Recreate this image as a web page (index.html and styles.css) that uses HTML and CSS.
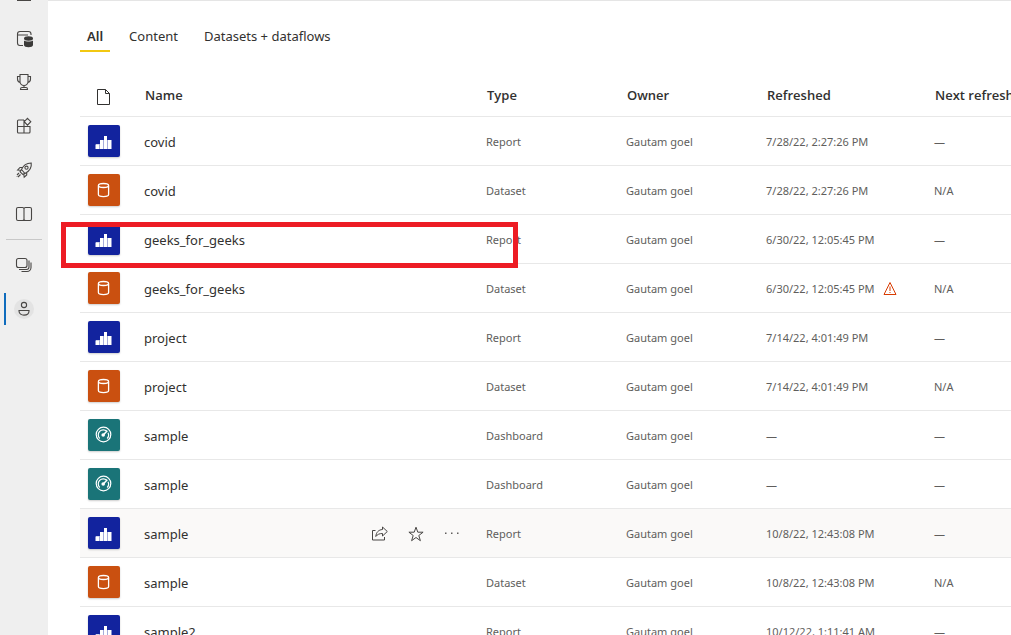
FILE: index.html
```html
<!DOCTYPE html>
<html lang="en">
<head>
    <meta charset="UTF-8">
    <meta name="viewport" content="width=device-width, initial-scale=1.0">
    <title>My workspace</title>
    <link rel="stylesheet" href="styles.css">
</head>
<body>
    <!-- shared icons -->
    <svg class="sprite" aria-hidden="true">
        <symbol id="report" viewBox="0 0 32 32">
            <path fill="#a6acdb" d="M8 19h4v5H8zM12 15h4v9h-4zM16 15h4v9h-4z"/>
            <path fill="#fff" d="M7.500 19.500H11V24H7.500zM12 15h3v9h-3zM16 11h3v13h-3zM20 15h3.500v9H20z"/>
        </symbol>
        <symbol id="dataset" viewBox="0 0 32 32">
            <path fill="none" stroke="#fff" stroke-width="1.3" d="M10.400 11.500v9c0 1.300 2.300 2.100 5.100 2.100s5.100-.8 5.100-2.100v-9M10.400 11.500c0-1.200 2.300-2 5.100-2s5.100.8 5.100 2-2.300 2-5.100 2-5.100-.8-5.100-2z"/>
        </symbol>
        <symbol id="dashboard" viewBox="0 0 32 32">
            <g fill="none" stroke="#fff" stroke-width="1.2">
                <circle cx="15.500" cy="15.500" r="7.300"/>
                <path d="M11.800 19.500a5 5 0 1 1 7-7.300M20 13.800a5 5 0 0 1-.8 5.700"/>
                <path stroke-width="1.5" d="M15.500 15.700l3.800-4"/>
            </g>
            <circle cx="15.200" cy="16" r="1.800" fill="#fff"/>
        </symbol>
    </svg>

    <div class="app">
        <nav class="sidebar" aria-label="Main">
            <a href="#" aria-label="Create"><svg viewBox="0 0 20 20"><path d="M3 5.500h14M3 16.500h14"/></svg></a>
            <a href="#" aria-label="Data hub"><svg viewBox="0 0 20 20">
                <path d="M9 17.500H6A2.500 2.500 0 0 1 3.500 15V6A2.500 2.500 0 0 1 6 3.500h8.500A2.500 2.500 0 0 1 17 6v1M3.500 7H14"/>
                <ellipse class="solid" cx="14.500" cy="10.500" rx="4.500" ry="2.200"/>
                <path class="solid" d="M10 12.500c1.500 1.400 7.500 1.400 9 0V17c0 3-9 3-9 0z"/>
            </svg></a>
            <a href="#" aria-label="Goals"><svg viewBox="0 0 20 20">
                <path d="M6 2.500h8v7a4 4 0 0 1-8 0zM6 4.500H3.500v2.500c0 2 1 3.300 3 3.500M14 4.500h2.500v2.500c0 2-1 3.300-3 3.500M10 13.500v2M6.500 17.500v-.5q0-1.500 1.500-1.500h4q1.500 0 1.500 1.500v.5z"/>
            </svg></a>
            <a href="#" aria-label="Apps"><svg viewBox="0 0 20 20">
                <path d="M10 4H4.500Q3.500 4 3.500 5v11q0 1 1 1H15q1 0 1-1v-5.500H3.500M10 4v13M13.500 2.300l3.300 3.400-3.300 3.400-3.300-3.400z"/>
            </svg></a>
            <a href="#" aria-label="Deployment pipelines"><svg viewBox="0 0 20 20">
                <path d="M7.500 9.500c1.800-4.300 5.300-6.500 9.700-6.500.7 4.600-1.700 8.100-6.200 10.500zM8.500 7.500H6L3.700 10l3.800.2M12.700 12v3l-2.500 2.200-.5-3.500M7.300 10l-1.300 1.700 2.700 2.700 1.800-1M5 13l-2 2M6.500 14.500l-2.500 2.500M3 16.500v.5"/>
                <circle cx="12.500" cy="7.700" r="1.600"/>
            </svg></a>
            <a href="#" aria-label="Learn"><svg viewBox="0 0 20 20">
                <path d="M10 5v10.500M10 5Q10 3.500 8.500 3.500H4Q2.500 3.500 2.500 5v10q0 1.500 1.500 1.500h4.500q1.500 0 1.500-1.500M10 5q0-1.500 1.500-1.500H16q1.500 0 1.500 1.500v10q0 1.500-1.500 1.500h-4.500Q10 16.500 10 15"/>
            </svg></a>
            <hr>
            <a href="#" aria-label="Workspaces"><svg viewBox="0 0 20 20">
                <rect x="2.500" y="3.500" width="10.500" height="9" rx="2"/>
                <path d="M5 14.500h7.500a2.500 2.500 0 0 0 2.500-2.500V5.500M7.500 16.500h5.500a4 4 0 0 0 4-4v-5"/>
            </svg></a>
            <a href="#" class="current" aria-label="My workspace" aria-current="page"><span><svg viewBox="0 0 20 20">
                <circle cx="10" cy="6" r="2.600"/>
                <path d="M5 11.500h10v.5c0 5.500-10 5.500-10 0z"/>
            </svg></span></a>
        </nav>

        <main>
            <div class="tabs">
                <a href="#" class="active">All</a>
                <a href="#">Content</a>
                <a href="#">Datasets + dataflows</a>
            </div>

            <table>
                <colgroup>
                    <col class="col-icon">
                    <col class="col-name">
                    <col class="col-type">
                    <col class="col-owner">
                    <col class="col-refreshed">
                    <col>
                </colgroup>
                <thead>
                    <tr>
                        <th class="icon" aria-label="Kind"><svg class="file" viewBox="0 0 13 16"><path d="M.5.5h8l4 4v11H.500zM8.500.5v4h4"/></svg></th>
                        <th>Name</th>
                        <th>Type</th>
                        <th>Owner</th>
                        <th>Refreshed</th>
                        <th>Next refresh</th>
                    </tr>
                </thead>
                <tbody>
                    <tr>
                        <td class="icon"><svg class="tile report"><use href="#report"/></svg></td>
                        <td class="name"><a href="#">covid</a></td>
                        <td>Report</td><td>Gautam goel</td><td>7/28/22, 2:27:26 PM</td><td>—</td>
                    </tr>
                    <tr>
                        <td class="icon"><svg class="tile dataset"><use href="#dataset"/></svg></td>
                        <td class="name"><a href="#">covid</a></td>
                        <td>Dataset</td><td>Gautam goel</td><td>7/28/22, 2:27:26 PM</td><td>N/A</td>
                    </tr>
                    <tr>
                        <td class="icon"><svg class="tile report"><use href="#report"/></svg><span class="highlight"></span></td>
                        <td class="name"><a href="#">geeks_for_geeks</a></td>
                        <td>Report</td><td>Gautam goel</td><td>6/30/22, 12:05:45 PM</td><td>—</td>
                    </tr>
                    <tr>
                        <td class="icon"><svg class="tile dataset"><use href="#dataset"/></svg></td>
                        <td class="name"><a href="#">geeks_for_geeks</a></td>
                        <td>Dataset</td><td>Gautam goel</td>
                        <td><span class="failed">6/30/22, 12:05:45 PM
                            <svg viewBox="0 0 14 14" role="img" aria-label="Refresh failed"><path d="M7 1.500L13 13.500H1zM7 5.500v4.500M7 11v1"/></svg></span></td>
                        <td>N/A</td>
                    </tr>
                    <tr>
                        <td class="icon"><svg class="tile report"><use href="#report"/></svg></td>
                        <td class="name"><a href="#">project</a></td>
                        <td>Report</td><td>Gautam goel</td><td>7/14/22, 4:01:49 PM</td><td>—</td>
                    </tr>
                    <tr>
                        <td class="icon"><svg class="tile dataset"><use href="#dataset"/></svg></td>
                        <td class="name"><a href="#">project</a></td>
                        <td>Dataset</td><td>Gautam goel</td><td>7/14/22, 4:01:49 PM</td><td>N/A</td>
                    </tr>
                    <tr>
                        <td class="icon"><svg class="tile dashboard"><use href="#dashboard"/></svg></td>
                        <td class="name"><a href="#">sample</a></td>
                        <td>Dashboard</td><td>Gautam goel</td><td>—</td><td>—</td>
                    </tr>
                    <tr>
                        <td class="icon"><svg class="tile dashboard"><use href="#dashboard"/></svg></td>
                        <td class="name"><a href="#">sample</a></td>
                        <td>Dashboard</td><td>Gautam goel</td><td>—</td><td>—</td>
                    </tr>
                    <tr class="hovered">
                        <td class="icon"><svg class="tile report"><use href="#report"/></svg></td>
                        <td class="name">
                            <div class="name-row">
                                <a href="#">sample</a>
                                <div class="actions">
                                    <button type="button" aria-label="Share"><svg viewBox="0 0 16 16"><path d="M3.500 4.500H.5v9.500h12V11M10.500 1L15.300 5.500l-4.800 4.500V7.500C7.500 7.500 5.500 8.300 3.800 10.500 4.200 6.300 6.500 3.800 10.500 3.500z"/></svg></button>
                                    <button type="button" aria-label="Favorite"><svg viewBox="0 0 16 16"><path d="M8 1.200l1.800 5h5.300l-4.300 3.300 1.600 5.200L8 11.500l-4.400 3.200 1.600-5.200L.9 6.200h5.300z"/></svg></button>
                                    <button type="button" aria-label="More options"><svg viewBox="0 0 16 16"><path class="solid" d="M1 6.500h1.500V8H1zM7 6.500h1.500V8H7zM13 6.500h1.500V8H13z"/></svg></button>
                                </div>
                            </div>
                        </td>
                        <td>Report</td><td>Gautam goel</td><td>10/8/22, 12:43:08 PM</td><td>—</td>
                    </tr>
                    <tr>
                        <td class="icon"><svg class="tile dataset"><use href="#dataset"/></svg></td>
                        <td class="name"><a href="#">sample</a></td>
                        <td>Dataset</td><td>Gautam goel</td><td>10/8/22, 12:43:08 PM</td><td>N/A</td>
                    </tr>
                    <tr>
                        <td class="icon"><svg class="tile report"><use href="#report"/></svg></td>
                        <td class="name"><a href="#">sample2</a></td>
                        <td>Report</td><td>Gautam goel</td><td>10/12/22, 1:11:41 AM</td><td>—</td>
                    </tr>
                </tbody>
            </table>
        </main>
    </div>
</body>
</html>
```
FILE: styles.css
```css
* {
    box-sizing: border-box;
}
body {
    margin: 0;
    font-family: "Noto Sans", "Open Sans", sans-serif;
    font-size: 13px;
    color: #323130;
    background-color: #fff;
}
a {
    color: inherit;
    text-decoration: none;
}
svg {
    display: block;
}
.sprite {
    display: none;
}
.app {
    display: flex;
    height: 100vh;
    overflow: hidden;
}

/* left rail, scrolled down a little */
.sidebar {
    flex: 0 0 48px;
    margin-top: -28px;
    background-color: #efefef;
}
.sidebar a {
    display: flex;
    align-items: center;
    justify-content: center;
    height: 44px;
}
.sidebar svg {
    width: 20px;
    height: 20px;
    fill: none;
    stroke: #484644;
    stroke-width: 1.1;
}
.sidebar .solid {
    fill: #3b3a39;
    stroke: none;
}
.sidebar hr {
    margin: 3px 6px;
    border: 0;
    border-top: 1px solid #c8c8c8;
}
.sidebar .current {
    position: relative;
}
.sidebar .current::before {
    content: "";
    position: absolute;
    left: 4px;
    top: 6px;
    width: 2px;
    height: 32px;
    background-color: #0f6cbd;
}
.sidebar .current span {
    border-radius: 50%;
    background-color: #e3e3e3;
}

main {
    flex: 1;
    min-width: 0;
    padding-left: 32px;
    overflow: hidden;
    border-top: 1px solid #e5e5e5;
}
.tabs {
    display: flex;
    gap: 12px;
    margin: 20px 0 22px;
}
.tabs a {
    height: 31px;
    padding: 0 7px;
    line-height: 30px;
    border-bottom: 2px solid transparent;
}
.tabs .active {
    font-weight: 600;
    border-bottom-color: #f2c811;
}

table {
    width: 100%;
    table-layout: fixed;
    border-collapse: separate;
    border-spacing: 0;
}
.col-icon {
    width: 64px;
}
.col-name {
    width: 342px;
}
.col-type,
.col-owner {
    width: 140px;
}
.col-refreshed {
    width: 168px;
}
th,
td {
    padding: 0;
    text-align: left;
    white-space: nowrap;
    border-bottom: 1px solid #e8e8e8;
}
th {
    height: 43px;
    padding-left: 1px;
    font-family: "Open Sans", sans-serif;
    font-weight: 600;
}
td {
    height: 49px;
    font-size: 11px;
    color: #605e5c;
}
.icon {
    position: relative;
    padding-left: 8px;
}
th.icon {
    padding: 3px 0 0 17px;
}
.file {
    width: 13px;
    height: 16px;
    fill: none;
    stroke: #323130;
}
.tile {
    width: 32px;
    height: 32px;
    border-radius: 2px;
    box-shadow: 0 1px 2px rgba(0, 0, 0, 0.2);
}
.tile.report {
    background-color: #12239e;
}
.tile.dataset {
    background-color: #ca5010;
}
.tile.dashboard {
    background-color: #1a7478;
}
.name {
    padding-top: 2px;
    font-size: 13px;
    color: #323130;
}
.name-row {
    display: flex;
    align-items: center;
    justify-content: space-between;
    padding-right: 26px;
}
.actions {
    display: flex;
    gap: 20px;
}
.actions button {
    padding: 0;
    border: 0;
    background: none;
    cursor: pointer;
}
.actions svg {
    width: 16px;
    height: 16px;
    fill: none;
    stroke: #484644;
}
.actions .solid {
    fill: #605e5c;
    stroke: none;
}
.failed {
    display: flex;
    align-items: center;
    gap: 8px;
}
.failed svg {
    width: 14px;
    height: 14px;
    fill: none;
    stroke: #d83b01;
}
.hovered td {
    background-color: #faf9f8;
}
.highlight {
    position: absolute;
    z-index: 1;
    left: -19px;
    top: 7px;
    width: 457px;
    height: 46px;
    border: 5px solid #ed1c24;
}
```
